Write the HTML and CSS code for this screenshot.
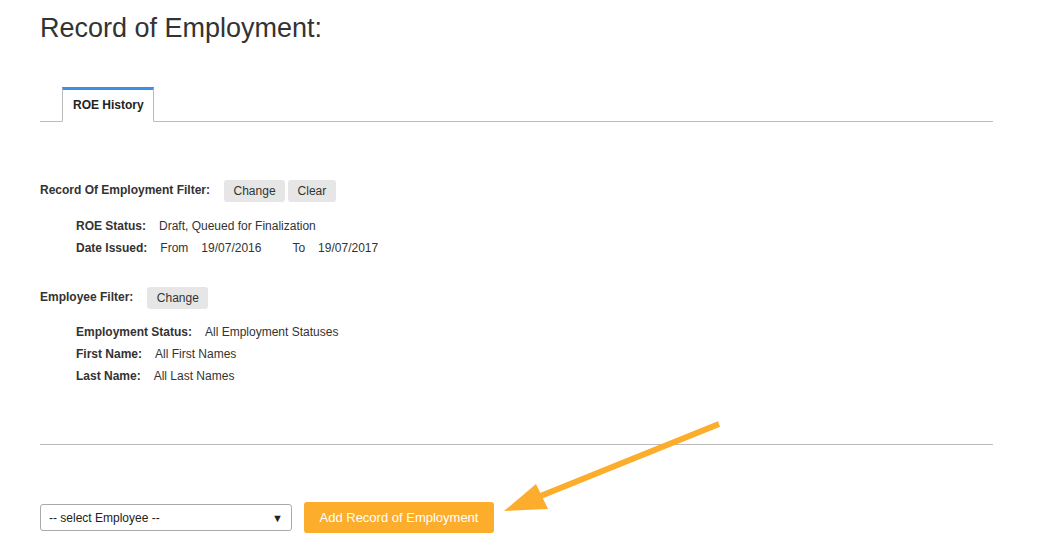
FILE: index.html
```html
<!DOCTYPE html>
<html>
<head>
<meta charset="utf-8">
<link rel="stylesheet" href="styles.css">
</head>
<body>
<div class="page">
  <h1 class="title">Record of Employment:</h1>
  <div class="tabs">
    <div class="tab active">ROE History</div>
  </div>

  <section class="filter roe-filter">
    <div class="filter-head">
      <span class="filter-label">Record Of Employment Filter:</span>
      <div class="btns">
        <button class="btn">Change</button>
        <button class="btn">Clear</button>
      </div>
    </div>
    <div class="filter-rows">
      <div class="row"><span class="k">ROE Status:</span><span>Draft, Queued for Finalization</span></div>
      <div class="row"><span class="k">Date Issued:</span><span>From</span><span>19/07/2016</span><span class="to">To</span><span>19/07/2017</span></div>
    </div>
  </section>

  <section class="filter emp-filter">
    <div class="filter-head">
      <span class="filter-label">Employee Filter:</span>
      <div class="btns">
        <button class="btn">Change</button>
      </div>
    </div>
    <div class="filter-rows">
      <div class="row"><span class="k">Employment Status:</span><span>All Employment Statuses</span></div>
      <div class="row"><span class="k">First Name:</span><span>All First Names</span></div>
      <div class="row"><span class="k">Last Name:</span><span>All Last Names</span></div>
    </div>
  </section>

  <div class="divider"></div>

  <div class="actions">
    <div class="select"><span>-- select Employee --</span><span class="caret">&#9660;</span></div>
    <button class="btn-primary">Add Record of Employment</button>
  </div>

  <svg class="pointer" width="1038" height="554" viewBox="0 0 1038 554">
    <line x1="719" y1="424" x2="538" y2="497" stroke="#fbad2b" stroke-width="6"/>
    <polygon points="504,511 536,484 548,509" fill="#fbad2b"/>
  </svg>
</div>
</body>
</html>
```

FILE: styles.css
```css
* { box-sizing: border-box; }
html, body { margin: 0; padding: 0; background: #fff; }
body {
  font-family: "Liberation Sans", Arial, sans-serif;
  color: #333;
  font-size: 12px;
}
.page {
  position: relative;
  width: 1038px;
  height: 554px;
  padding: 13px 45px 0 40px;
}
.title {
  margin: 0;
  font-size: 27px;
  line-height: 31px;
  font-weight: normal;
  color: #333;
}
.tabs {
  margin-top: 43px;
  border-bottom: 1px solid #bbb;
  display: flex;
  padding-left: 22px;
}
.tab {
  margin-bottom: -1px;
  border: 1px solid #bbb;
  border-top: 3px solid #3d8fe3;
  border-bottom-color: #fff;
  background: #fff;
  padding: 5px 9.5px 6px 10px;
  line-height: 20px;
  font-weight: bold;
  font-size: 12px;
  color: #222;
}
.filter { display: flex; flex-direction: column; }
.roe-filter { margin-top: 58px; }
.emp-filter { margin-top: 28px; }
.filter-head {
  display: flex;
  align-items: flex-start;
  gap: 14px;
}
.filter-label {
  font-weight: bold;
  line-height: 20px;
}
.btns { display: flex; gap: 3px; }
.btn {
  font-family: "Liberation Sans", Arial, sans-serif;
  font-size: 12px;
  color: #333;
  background: #e6e6e6;
  border: none;
  border-radius: 3px;
  height: 22px;
  padding: 0 9.5px;
  line-height: 22px;
}
.filter-rows {
  margin-top: 13px;
  padding-left: 36px;
  display: flex;
  flex-direction: column;
}
.emp-filter .filter-rows { margin-top: 12px; }
.row {
  display: flex;
  gap: 13px;
  line-height: 22px;
}
.row .k { font-weight: bold; }
.row .to { margin-left: 18px; }
.divider {
  margin-top: 57px;
  border-top: 1px solid #bbb;
}
.actions {
  margin-top: 57px;
  display: flex;
  align-items: center;
  gap: 12px;
}
.select {
  width: 252px;
  height: 27px;
  border: 1px solid #aaa;
  border-radius: 3px;
  display: flex;
  align-items: center;
  justify-content: space-between;
  padding: 0 8px;
  font-size: 12px;
  color: #222;
}
.caret { font-size: 11px; color: #222; }
.btn-primary {
  font-family: "Liberation Sans", Arial, sans-serif;
  font-size: 13px;
  color: #fff;
  background: #fbad2b;
  border: none;
  border-radius: 3px;
  height: 31px;
  padding: 0 15.5px;
}
.pointer {
  position: absolute;
  left: 0;
  top: 0;
  pointer-events: none;
}
```
